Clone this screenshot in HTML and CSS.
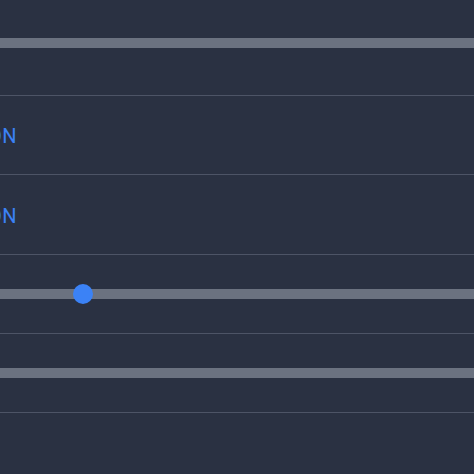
FILE: index.html
```html
<!DOCTYPE html>
<html>
<head>
<meta charset="utf-8">
<link rel="stylesheet" href="styles.css">
</head>
<body>
<div class="list">
  <div class="row row-top"><div class="track"></div></div>
  <div class="row row-mid"><span class="toggle-label">ON</span></div>
  <div class="row row-mid2"><span class="toggle-label">ON</span></div>
  <div class="row row-slider">
    <div class="track slider"><span class="knob"></span></div>
  </div>
  <div class="row row-last"><div class="track"></div></div>
</div>
</body>
</html>
```

FILE: styles.css
```css
html, body {
  margin: 0;
  padding: 0;
  background: #2a3142;
  font-family: Roboto, "Noto Sans", sans-serif;
}
.list {
  display: flex;
  flex-direction: column;
}
.row {
  display: flex;
  flex-direction: column;
  justify-content: center;
  border-bottom: 1px solid #4d5466;
  box-sizing: content-box;
}
.row-top {
  height: 95px;
  justify-content: flex-start;
}
.row-top .track {
  margin-top: 38px;
}
.row-mid { height: 78px; }
.row-mid2 { height: 79px; }
.row-slider { height: 78px; }
.row-last { height: 78px; }
.track {
  height: 10px;
  background: #6b7280;
  width: 100%;
}
.slider {
  position: relative;
  margin-top: -1px;
}
.knob {
  position: absolute;
  left: 73px;
  top: -5px;
  width: 20px;
  height: 20px;
  border-radius: 50%;
  background: #3b82f6;
}
.toggle-label {
  color: #3b82f6;
  font-size: 20px;
  line-height: 24px;
  margin-left: -12px;
  padding-top: 2px;
  letter-spacing: 0.5px;
}
```
